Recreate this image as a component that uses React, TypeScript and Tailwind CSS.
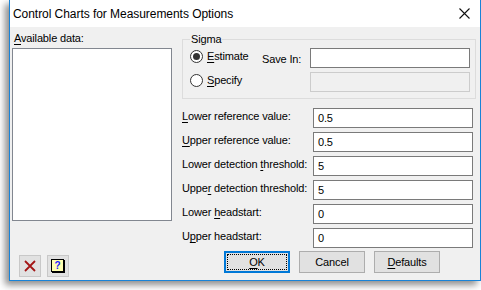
import React from "react"

const font = { fontFamily: '"Liberation Sans", Arial, sans-serif' }

function U({ children }: { children: React.ReactNode }) {
  return <span className="underline underline-offset-[2px] decoration-[1px]">{children}</span>
}

function Radio({ checked }: { checked?: boolean }) {
  return (
    <div className="w-[13px] h-[13px] rounded-full border border-[#333333] bg-white flex items-center justify-center shrink-0">
      {checked && <div className="w-[7px] h-[7px] rounded-full bg-[#333333]" />}
    </div>
  )
}

function Field({ value, disabled }: { value?: string; disabled?: boolean }) {
  return (
    <div
      className={
        disabled
          ? "w-[160px] h-[20px] border border-[#cccccc] bg-[#f0f0f0]"
          : "w-[160px] h-[20px] border border-[#7a7a7a] bg-white flex items-center pl-[4px] text-[11px] text-black"
      }
    >
      {value}
    </div>
  )
}

const rows: { label: React.ReactNode; value: string }[] = [
  { label: <><U>L</U>ower reference value:</>, value: "0.5" },
  { label: <><U>U</U>pper reference value:</>, value: "0.5" },
  { label: <>Lower detection <U>t</U>hreshold:</>, value: "5" },
  { label: <>Uppe<U>r</U> detection threshold:</>, value: "5" },
  { label: <>Lower <U>h</U>eadstart:</>, value: "0" },
  { label: <>U<U>p</U>per headstart:</>, value: "0" },
]

export default function App() {
  return (
    <div className="w-[481px] h-[290px] bg-white overflow-hidden pl-[9px]" style={font}>
      <div className="w-[472px] h-[281px] border-x border-b border-[#1883d7] bg-[#f0f0f0] flex flex-col shadow-[-4px_4px_7px_rgba(0,0,0,0.45)]">
        {/* Title bar */}
        <div className="h-[27px] bg-white flex items-center justify-between pl-[3px] pr-[10px]">
          <span className="text-[12px] text-black tracking-[-0.05px]">Control Charts for Measurements Options</span>
          <svg width="11" height="11" viewBox="0 0 11 11">
            <path d="M0.5 0.5 L10.5 10.5 M10.5 0.5 L0.5 10.5" stroke="#111" strokeWidth="1.1" />
          </svg>
        </div>

        {/* Body */}
        <div className="flex-1 flex pl-[2px] text-[11px] text-black tracking-[-0.15px]">
          {/* Left column */}
          <div className="w-[160px] flex flex-col pt-[5px] pb-[3px]">
            <div className="h-[16px] leading-[12px] pl-[2px]">
              <U>A</U>vailable data:
            </div>
            <div className="h-[173px] border border-[#828790] bg-white" />
            <div className="mt-auto flex gap-[6px] pl-[7px]">
              <button className="w-[22px] h-[22px] bg-[#e1e1e1] border border-[#c8c8c8] flex items-center justify-center">
                <svg width="12" height="12" viewBox="0 0 12 12">
                  <path d="M1 1 L11 11 M11 1 L1 11" stroke="#a31515" strokeWidth="1.8" />
                </svg>
              </button>
              <button className="w-[22px] h-[22px] bg-[#e1e1e1] border border-[#c8c8c8] flex items-center justify-center">
                <div className="relative w-[14px] h-[14px]">
                  <div className="absolute left-[1px] top-[1px] w-[13px] h-[13px] bg-black" />
                  <div className="absolute left-0 top-0 w-[13px] h-[13px] border border-black bg-[#ffffb0] flex items-center justify-center text-[10px] font-bold text-[#1a1aff] leading-none tracking-normal">
                    ?
                  </div>
                </div>
              </button>
            </div>
          </div>

          {/* Right column */}
          <div className="ml-[10px] w-[294px] flex flex-col pt-[5px]">
            <fieldset className="border border-[#dcdcdc] pl-[7px] pr-[4px] pb-[6px]">
              <legend className="px-[1px] leading-[14px] ml-0">Sigma</legend>
              <div className="mt-[2px] flex flex-col gap-[4px]">
                <div className="flex h-[20px]">
                  <div className="w-[72px] flex items-start pt-[2px] gap-[4px]">
                    <Radio checked />
                    <span className="leading-[13px]"><U>E</U>stimate</span>
                  </div>
                  <div className="w-[48px] flex items-center pt-[2px]">Save In:</div>
                  <Field />
                </div>
                <div className="flex h-[20px]">
                  <div className="w-[120px] flex items-start pt-[2px] gap-[4px]">
                    <Radio />
                    <span className="leading-[13px]"><U>S</U>pecify</span>
                  </div>
                  <Field disabled />
                </div>
              </div>
            </fieldset>

            <div className="mt-[9px] flex flex-col gap-[4px]">
              {rows.map((r, i) => (
                <div key={i} className="flex items-center h-[20px]">
                  <div className="w-[131px] pb-[3px] whitespace-nowrap">{r.label}</div>
                  <Field value={r.value} />
                </div>
              ))}
            </div>

            <div className="mt-[3px] flex gap-[9px] pl-[42px]">
              <button className="w-[66px] h-[22px] bg-[#e1e1e1] border-2 border-[#0078d7] p-[1px]">
                <div className="w-full h-full border border-dotted border-black flex items-center justify-center">
                  <U>O</U>K
                </div>
              </button>
              <button className="w-[66px] h-[22px] bg-[#e1e1e1] border border-[#adadad] flex items-center justify-center">
                Cancel
              </button>
              <button className="w-[66px] h-[22px] bg-[#e1e1e1] border border-[#adadad] flex items-center justify-center">
                <U>D</U>efaults
              </button>
            </div>
          </div>
        </div>
      </div>
    </div>
  )
}
